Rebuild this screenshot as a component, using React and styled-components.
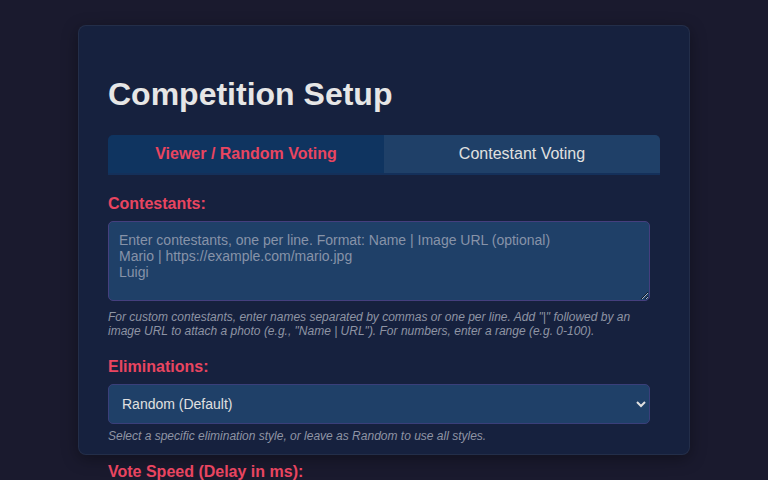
// Competition setup screen - setup card with tabs and form fields

import { useState } from 'react';
import styled, { createGlobalStyle } from 'styled-components';

const GlobalStyle = createGlobalStyle`
  html, body {
    margin: 0;
    background-color: #1a1a2e;
    font-family: "Liberation Sans", Arial, sans-serif;
    color: #e0e0e0;
  }
`;

// Page wrapper
const Page = styled.div`
  box-sizing: border-box;
  min-height: 100vh;
  padding-top: 25px;
  display: flex;
  flex-direction: column;
  align-items: center;
`;

// Setup card
const Card = styled.div`
  box-sizing: border-box;
  width: 612px;
  height: 430px;
  flex-shrink: 0;
  padding: 29px;
  background-color: #16213e;
  border: 1px solid rgba(255, 255, 255, 0.06);
  border-radius: 8px;
  box-shadow: 0 4px 16px rgba(0, 0, 0, 0.35);
`;

const Title = styled.h1`
  font-size: 32px;
  font-weight: bold;
  color: #e6e6e6;
  margin: 21px 0 22px;
`;

// Tab bar
const Tabs = styled.div`
  display: flex;
  border-bottom: 2px solid #14305a;
  border-radius: 5px 5px 0 0;
  overflow: hidden;
  margin-bottom: 20px;
`;

const Tab = styled.button`
  flex: 1;
  border: none;
  padding: 10px;
  font-family: inherit;
  font-size: 16px;
  cursor: pointer;
  background-color: ${(p) => (p.$active ? '#0f3460' : '#1f4068')};
  color: ${(p) => (p.$active ? '#e94560' : '#e0e0e0')};
  font-weight: ${(p) => (p.$active ? 'bold' : 'normal')};
`;

const Group = styled.div`
  margin-bottom: 20px;
`;

const Label = styled.label`
  display: block;
  font-size: 16px;
  font-weight: bold;
  color: #e94560;
  margin-bottom: 8px;
`;

const TextArea = styled.textarea`
  display: block;
  box-sizing: border-box;
  width: calc(100% - 10px);
  height: 80px;
  margin: 0 0 9px;
  padding: 10px;
  border: 1px solid #453f7e;
  border-radius: 5px;
  background-color: #1f4068;
  color: #e0e0e0;
  font-family: inherit;
  font-size: 14px;
  line-height: 16px;

  &::placeholder {
    color: #8793a8;
  }
`;

const Select = styled.select`
  display: block;
  box-sizing: border-box;
  width: calc(100% - 10px);
  height: 40px;
  margin: 0;
  padding: 0 8px 0 9px;
  border: 1px solid #3a3f7a;
  border-radius: 5px;
  background-color: #1f4068;
  color: #e0e0e0;
  font-family: inherit;
  font-size: 14px;
`;

const Help = styled.p`
  margin: 5px 0 0;
  font-size: 12px;
  font-style: italic;
  color: #8e94a4;
  line-height: 14px;
`;

function App() {
  const [mode, setMode] = useState('viewer');

  return (
    <>
      <GlobalStyle />
      <Page>
        <Card>
          <Title>Competition Setup</Title>

          {/* Voting mode tabs */}
          <Tabs>
            <Tab $active={mode === 'viewer'} onClick={() => setMode('viewer')}>
              Viewer / Random Voting
            </Tab>
            <Tab $active={mode === 'contestant'} onClick={() => setMode('contestant')}>
              Contestant Voting
            </Tab>
          </Tabs>

          <Group>
            <Label>Contestants:</Label>
            <TextArea
              placeholder={'Enter contestants, one per line. Format: Name | Image URL (optional)\nMario | https://example.com/mario.jpg\nLuigi'}
            />
            <Help>
              For custom contestants, enter names separated by commas or one per line. Add "|" followed by an
              image URL to attach a photo (e.g., "Name | URL"). For numbers, enter a range (e.g. 0-100).
            </Help>
          </Group>

          <Group>
            <Label>Eliminations:</Label>
            <Select defaultValue="random">
              <option value="random">Random (Default)</option>
            </Select>
            <Help>Select a specific elimination style, or leave as Random to use all styles.</Help>
          </Group>

          <Group>
            <Label>Vote Speed (Delay in ms):</Label>
          </Group>
        </Card>
      </Page>
    </>
  );
}

export default App;
